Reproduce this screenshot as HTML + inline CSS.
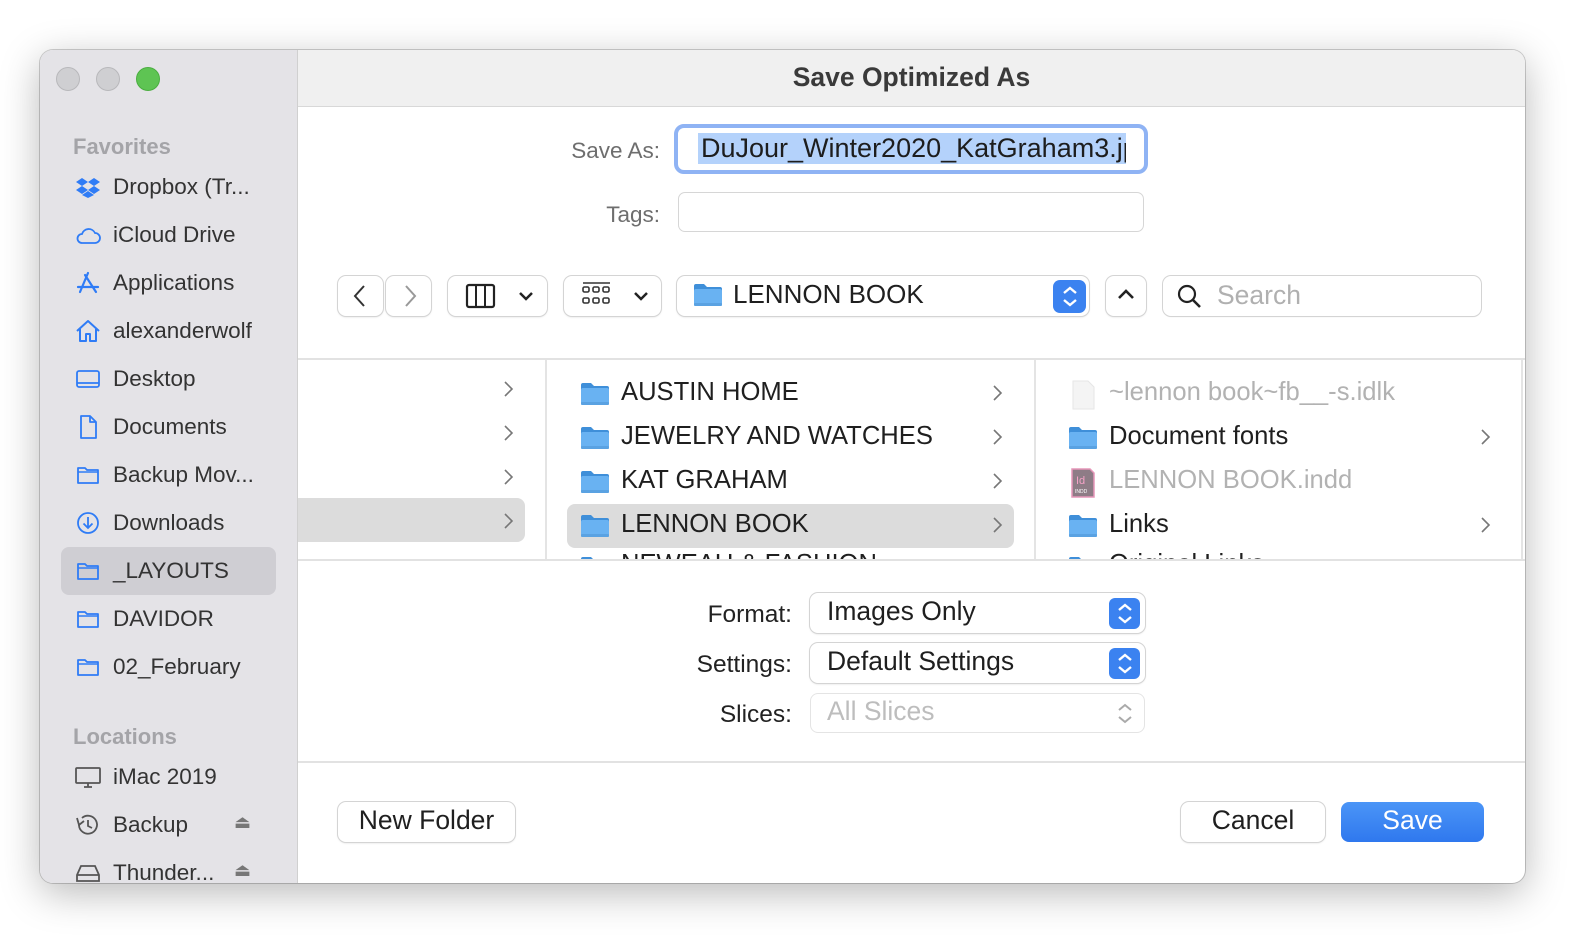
<!DOCTYPE html>
<html><head><style>
*{margin:0;padding:0;box-sizing:border-box}
body{width:1573px;height:939px;background:#fff;font-family:"Liberation Sans",sans-serif;position:relative;overflow:hidden;color:#262626}
.a{position:absolute;white-space:nowrap}
#win{position:absolute;left:40px;top:50px;width:1485px;height:833px;border-radius:13px;overflow:hidden;background:#fff;box-shadow:0 10px 40px rgba(0,0,0,.28),0 0 0 1px rgba(0,0,0,.18)}
#side{position:absolute;left:0;top:0;width:258px;height:833px;background:#e4e3e7;border-right:1px solid #d0d0d0}
.dot{position:absolute;top:17px;width:24px;height:24px;border-radius:50%;background:#cfcfd2;border:1px solid #b8b8bb}
.sh{position:absolute;left:33px;font-size:22px;font-weight:bold;color:#a4a4a8}
.si{position:absolute;left:73px;font-size:22.5px;color:#333}
.ic{position:absolute;left:35px;width:26px;height:26px}
.btn{position:absolute;background:#fff;border-radius:8px;box-shadow:0 0 0 1px #d4d4d4,0 1px 2px rgba(0,0,0,.15)}
.ct{font-size:25.6px;color:#1f1f1f}
.fold{position:absolute;width:30px;height:24px}
.lb{position:absolute;width:200px;text-align:right;font-size:24.5px;color:#222}
</style></head><body>
<svg width="0" height="0" style="position:absolute"><defs>
<symbol id="f" viewBox="0 0 30 24"><path d="M1 3a2 2 0 0 1 2-2h8l3 3h13a2 2 0 0 1 2 2v2H1z" fill="#3f8fd9"/><rect x="1" y="6" width="28" height="17" rx="2" fill="#69b2f2"/><rect x="1" y="20" width="28" height="3" rx="1" fill="#5aa2e2"/></symbol>
<symbol id="sf" viewBox="0 0 26 26"><path d="M3 6h7l2 2h11v13H3z" fill="none" stroke="#2f7cf6" stroke-width="1.8" stroke-linejoin="round"/><path d="M3 10h20" stroke="#2f7cf6" stroke-width="1.6"/></symbol>
</defs></svg>
<div id="win">
<div id="side">
<div class="dot" style="left:16px"></div><div class="dot" style="left:56px"></div><div class="dot" style="left:96px;background:#5ec453;border-color:#4aae40"></div>
<div class="sh" style="top:84px">Favorites</div>
<svg class="ic" style="top:124px" viewBox="0 0 26 26"><path d="M7 4l6 4-6 4-6-4zM19 4l6 4-6 4-6-4zM7 12l6 4-6 4-6-4zM19 12l6 4-6 4-6-4zM13 17l6 4-6 3-6-3z" fill="#2f7cf6"/></svg>
<div class="si" style="top:124px">Dropbox (Tr...</div>
<svg class="ic" style="top:172px" viewBox="0 0 26 26"><path d="M7 21h13a5 5 0 0 0 0-10 7 7 0 0 0-13 1 4.5 4.5 0 0 0 0 9z" fill="none" stroke="#2f7cf6" stroke-width="1.8"/></svg>
<div class="si" style="top:172px">iCloud Drive</div>
<svg class="ic" style="top:220px" viewBox="0 0 26 26"><path d="M13 3L5 22M10 5l11 17M3 17h20" stroke="#2f7cf6" stroke-width="2.2" stroke-linecap="round" fill="none"/></svg>
<div class="si" style="top:220px">Applications</div>
<svg class="ic" style="top:268px" viewBox="0 0 26 26"><path d="M2 13L13 3l11 10M5 11v12h6v-7h4v7h6V11" fill="none" stroke="#2f7cf6" stroke-width="2" stroke-linejoin="round"/></svg>
<div class="si" style="top:268px">alexanderwolf</div>
<svg class="ic" style="top:316px" viewBox="0 0 26 26"><rect x="2" y="5" width="22" height="16" rx="2" fill="none" stroke="#2f7cf6" stroke-width="1.8"/><path d="M2 17h22" stroke="#2f7cf6" stroke-width="1.8"/></svg>
<div class="si" style="top:316px">Desktop</div>
<svg class="ic" style="top:364px" viewBox="0 0 26 26"><path d="M6 2h9l6 6v16H6z M15 2v6h6" fill="none" stroke="#2f7cf6" stroke-width="1.8" stroke-linejoin="round"/></svg>
<div class="si" style="top:364px">Documents</div>
<svg class="ic" style="top:412px"><use href="#sf"/></svg><div class="si" style="top:412px">Backup Mov...</div>
<svg class="ic" style="top:460px" viewBox="0 0 26 26"><circle cx="13" cy="13" r="10" fill="none" stroke="#2f7cf6" stroke-width="1.8"/><path d="M13 7v11M8.5 13.5L13 18l4.5-4.5" fill="none" stroke="#2f7cf6" stroke-width="1.8"/></svg>
<div class="si" style="top:460px">Downloads</div>
<div style="position:absolute;left:21px;top:497px;width:215px;height:48px;border-radius:8px;background:#cfced3"></div>
<svg class="ic" style="top:508px"><use href="#sf"/></svg><div class="si" style="top:508px">_LAYOUTS</div>
<svg class="ic" style="top:556px"><use href="#sf"/></svg><div class="si" style="top:556px">DAVIDOR</div>
<svg class="ic" style="top:604px"><use href="#sf"/></svg><div class="si" style="top:604px">02_February</div>
<div class="sh" style="top:674px">Locations</div>
<svg class="ic" style="top:714px" viewBox="0 0 26 26"><rect x="1" y="4" width="24" height="15" rx="1" fill="none" stroke="#555" stroke-width="1.8"/><path d="M9 23h8M13 19v4" stroke="#555" stroke-width="1.8"/></svg>
<div class="si" style="top:714px">iMac 2019</div>
<svg class="ic" style="top:762px" viewBox="0 0 26 26"><path d="M4 13a9 9 0 1 0 3-7" fill="none" stroke="#555" stroke-width="1.8"/><path d="M2 6l2 7 5-4M13 8v6l4 2" fill="none" stroke="#555" stroke-width="1.8"/></svg>
<div class="si" style="top:762px">Backup</div>
<div class="a" style="left:194px;top:762px;font-size:18px;color:#777">⏏</div>
<svg class="ic" style="top:810px" viewBox="0 0 26 26"><path d="M2 15l4-9h14l4 9v6H2z M2 15h22" fill="none" stroke="#555" stroke-width="1.8"/></svg>
<div class="si" style="top:810px">Thunder...</div>
<div class="a" style="left:194px;top:810px;font-size:18px;color:#777">⏏</div>
</div>
<div style="position:absolute;left:258px;top:0;width:1227px;height:57px;background:#f0f0f0;border-bottom:1px solid #d8d8d8"></div>
<div class="a" style="left:258px;width:1227px;top:12px;text-align:center;font-size:26.5px;font-weight:bold;color:#3a3a3a">Save Optimized As</div>
<div class="lb" style="left:420px;top:88px;font-size:22.5px;color:#6e6e6e">Save As:</div>
<div style="position:absolute;left:634px;top:74px;width:474px;height:50px;border-radius:10px;border:4px solid #8fb3f4;background:#fff"></div>
<div style="position:absolute;left:658px;top:83px;width:428px;height:31px;background:#b4d2fb;overflow:hidden"><span class="a" style="left:3px;top:0;font-size:27px;color:#1d1d1d">DuJour_Winter2020_KatGraham3.jpg</span></div>
<div class="lb" style="left:420px;top:152px;font-size:22.5px;color:#6e6e6e">Tags:</div>
<div style="position:absolute;left:638px;top:142px;width:466px;height:40px;border-radius:7px;border:1px solid #d6d6d6;background:#fff"></div>
<div class="btn" style="left:298px;top:226px;width:45px;height:40px"></div>
<div class="btn" style="left:346px;top:226px;width:45px;height:40px"></div>
<svg class="a" style="left:310px;top:234px" width="20" height="24"><path d="M14 2L5 12l9 10" fill="none" stroke="#333" stroke-width="2"/></svg>
<svg class="a" style="left:360px;top:234px" width="20" height="24"><path d="M6 2l9 10-9 10" fill="none" stroke="#999" stroke-width="2"/></svg>
<div class="btn" style="left:408px;top:226px;width:99px;height:40px"></div>
<svg class="a" style="left:425px;top:233px" width="32" height="26"><rect x="2" y="2" width="27" height="22" rx="2" fill="none" stroke="#222" stroke-width="2.2"/><path d="M11 2v22M20 2v22" stroke="#222" stroke-width="2"/></svg>
<svg class="a" style="left:478px;top:240px" width="16" height="12"><path d="M2 3l6 6 6-6" fill="none" stroke="#222" stroke-width="2.5"/></svg>
<div class="btn" style="left:524px;top:226px;width:97px;height:40px"></div>
<svg class="a" style="left:542px;top:231px" width="30" height="30"><path d="M1 2h27" stroke="#333" stroke-width="1.5"/><g fill="none" stroke="#333" stroke-width="1.6"><rect x="1" y="6" width="6" height="5" rx="1.5"/><rect x="11" y="6" width="6" height="5" rx="1.5"/><rect x="21" y="6" width="6" height="5" rx="1.5"/><rect x="1" y="17" width="6" height="5" rx="1.5"/><rect x="11" y="17" width="6" height="5" rx="1.5"/><rect x="21" y="17" width="6" height="5" rx="1.5"/></g></svg>
<svg class="a" style="left:593px;top:240px" width="16" height="12"><path d="M2 3l6 6 6-6" fill="none" stroke="#222" stroke-width="2.5"/></svg>
<div class="btn" style="left:637px;top:226px;width:412px;height:40px"></div>
<svg class="fold" style="left:653px;top:233px"><use href="#f"/></svg>
<div class="a" style="left:693px;top:229px;font-size:26px;color:#1f1f1f">LENNON BOOK</div>
<div style="position:absolute;left:1013px;top:230px;width:33px;height:33px;border-radius:7px;background:#3b82f0"></div>
<svg class="a" style="left:1019px;top:234px" width="22" height="26"><path d="M5 9l6-5 6 5M5 16l6 5 6-5" fill="none" stroke="#fff" stroke-width="2.4"/></svg>
<div class="btn" style="left:1066px;top:226px;width:40px;height:40px"></div>
<svg class="a" style="left:1076px;top:238px" width="20" height="14"><path d="M3 10l7-7 7 7" fill="none" stroke="#222" stroke-width="2.6"/></svg>
<div class="btn" style="left:1123px;top:226px;width:318px;height:40px;box-shadow:0 0 0 1px #d4d4d4,0 1px 1px rgba(0,0,0,.12)"></div>
<svg class="a" style="left:1136px;top:233px" width="28" height="28"><circle cx="11" cy="11" r="8" fill="none" stroke="#222" stroke-width="2.2"/><path d="M17 17l7 7" stroke="#222" stroke-width="2.6"/></svg>
<div class="a" style="left:1177px;top:230px;font-size:26.5px;color:#b0b0b0">Search</div>
<div style="position:absolute;left:258px;top:308px;width:1227px;height:203px;border-top:2px solid #e2e2e2;border-bottom:2px solid #e2e2e2;overflow:hidden">
<div style="position:absolute;left:247px;top:0;width:2px;height:203px;background:#e4e4e4"></div>
<div style="position:absolute;left:736px;top:0;width:2px;height:203px;background:#e4e4e4"></div>
<div style="position:absolute;left:1223px;top:0;width:2px;height:203px;background:#e4e4e4"></div>
<div style="position:absolute;left:0;top:138px;width:227px;height:44px;border-radius:0 8px 8px 0;background:#dcdcdc"></div>
<svg class="a" style="left:203px;top:20px" width="14" height="18"><path d="M4 2l7 7-7 7" fill="none" stroke="#777" stroke-width="1.6"/></svg>
<svg class="a" style="left:203px;top:64px" width="14" height="18"><path d="M4 2l7 7-7 7" fill="none" stroke="#777" stroke-width="1.6"/></svg>
<svg class="a" style="left:203px;top:108px" width="14" height="18"><path d="M4 2l7 7-7 7" fill="none" stroke="#777" stroke-width="1.6"/></svg>
<svg class="a" style="left:203px;top:152px" width="14" height="18"><path d="M4 2l7 7-7 7" fill="none" stroke="#777" stroke-width="1.6"/></svg>
<div style="position:absolute;left:269px;top:144px;width:447px;height:44px;border-radius:8px;background:#dcdcdc"></div>
<svg class="fold" style="left:282px;top:22px"><use href="#f"/></svg><div class="a ct" style="left:323px;top:18px">AUSTIN HOME</div>
<svg class="fold" style="left:282px;top:66px"><use href="#f"/></svg><div class="a ct" style="left:323px;top:62px">JEWELRY AND WATCHES</div>
<svg class="fold" style="left:282px;top:110px"><use href="#f"/></svg><div class="a ct" style="left:323px;top:106px">KAT GRAHAM</div>
<svg class="fold" style="left:282px;top:154px"><use href="#f"/></svg><div class="a ct" style="left:323px;top:150px">LENNON BOOK</div>
<svg class="fold" style="left:282px;top:196px"><use href="#f"/></svg><div class="a ct" style="left:323px;top:190px">NEWEAU & FASHION</div>
<svg class="a" style="left:692px;top:24px" width="14" height="18"><path d="M4 2l7 7-7 7" fill="none" stroke="#777" stroke-width="1.6"/></svg>
<svg class="a" style="left:692px;top:68px" width="14" height="18"><path d="M4 2l7 7-7 7" fill="none" stroke="#777" stroke-width="1.6"/></svg>
<svg class="a" style="left:692px;top:112px" width="14" height="18"><path d="M4 2l7 7-7 7" fill="none" stroke="#777" stroke-width="1.6"/></svg>
<svg class="a" style="left:692px;top:156px" width="14" height="18"><path d="M4 2l7 7-7 7" fill="none" stroke="#777" stroke-width="1.6"/></svg>
<svg class="a" style="left:772px;top:20px" width="28" height="30"><path d="M3 1h15l6 6v22H3z" fill="#f4f4f4" stroke="#e6e6e6"/></svg>
<div class="a ct" style="left:811px;top:18px;color:#b2b2b2">~lennon book~fb__-s.idlk</div>
<svg class="fold" style="left:770px;top:66px"><use href="#f"/></svg><div class="a ct" style="left:811px;top:62px">Document fonts</div>
<svg class="a" style="left:772px;top:108px" width="26" height="30"><path d="M2 1h18l4 4v24H2z" fill="#8e7c86" stroke="#e695b8" stroke-width="1.5"/><text x="6" y="16" font-size="11" fill="#f5a3c7" font-family="Liberation Sans">Id</text><text x="5" y="25" font-size="5" fill="#fff" font-family="Liberation Sans">INDD</text></svg>
<div class="a ct" style="left:811px;top:106px;color:#b2b2b2">LENNON BOOK.indd</div>
<svg class="fold" style="left:770px;top:154px"><use href="#f"/></svg><div class="a ct" style="left:811px;top:150px">Links</div>
<svg class="fold" style="left:770px;top:196px"><use href="#f"/></svg><div class="a ct" style="left:811px;top:190px">Original Links</div>
<svg class="a" style="left:1180px;top:68px" width="14" height="18"><path d="M4 2l7 7-7 7" fill="none" stroke="#777" stroke-width="1.6"/></svg>
<svg class="a" style="left:1180px;top:156px" width="14" height="18"><path d="M4 2l7 7-7 7" fill="none" stroke="#777" stroke-width="1.6"/></svg>
</div>
<div class="lb" style="left:552px;top:551px">Format:</div>
<div class="lb" style="left:552px;top:601px">Settings:</div>
<div class="lb" style="left:552px;top:651px">Slices:</div>
<div class="btn" style="left:770px;top:543px;width:335px;height:40px"></div>
<div class="a" style="left:787px;top:546px;font-size:26.5px;color:#1f1f1f">Images Only</div>
<div style="position:absolute;left:1069px;top:548px;width:31px;height:31px;border-radius:6px;background:#3b82f0"></div>
<svg class="a" style="left:1074px;top:551px" width="22" height="26"><path d="M5 9l6-5 6 5M5 16l6 5 6-5" fill="none" stroke="#fff" stroke-width="2.4"/></svg>
<div class="btn" style="left:770px;top:593px;width:335px;height:40px"></div>
<div class="a" style="left:787px;top:596px;font-size:26.5px;color:#1f1f1f">Default Settings</div>
<div style="position:absolute;left:1069px;top:598px;width:31px;height:31px;border-radius:6px;background:#3b82f0"></div>
<svg class="a" style="left:1074px;top:601px" width="22" height="26"><path d="M5 9l6-5 6 5M5 16l6 5 6-5" fill="none" stroke="#fff" stroke-width="2.4"/></svg>
<div style="position:absolute;left:770px;top:643px;width:335px;height:40px;border-radius:8px;border:1px solid #e4e4e4"></div>
<div class="a" style="left:787px;top:646px;font-size:26.5px;color:#bdbdbd">All Slices</div>
<svg class="a" style="left:1074px;top:651px" width="22" height="26"><path d="M5 9l6-5 6 5M5 16l6 5 6-5" fill="none" stroke="#aaa" stroke-width="2"/></svg>
<div style="position:absolute;left:258px;top:711px;width:1227px;height:2px;background:#e2e2e2"></div>
<div class="btn" style="left:298px;top:752px;width:177px;height:40px"></div>
<div class="a" style="left:298px;width:177px;text-align:center;top:755px;font-size:26.5px;color:#1f1f1f">New Folder</div>
<div class="btn" style="left:1141px;top:752px;width:144px;height:40px"></div>
<div class="a" style="left:1141px;width:144px;text-align:center;top:755px;font-size:26.5px;color:#1f1f1f">Cancel</div>
<div style="position:absolute;left:1301px;top:752px;width:143px;height:40px;border-radius:8px;background:linear-gradient(#4b95f7,#2f78ee)"></div>
<div class="a" style="left:1301px;width:143px;text-align:center;top:755px;font-size:26.5px;color:#fff">Save</div>
</div>
</body></html>
